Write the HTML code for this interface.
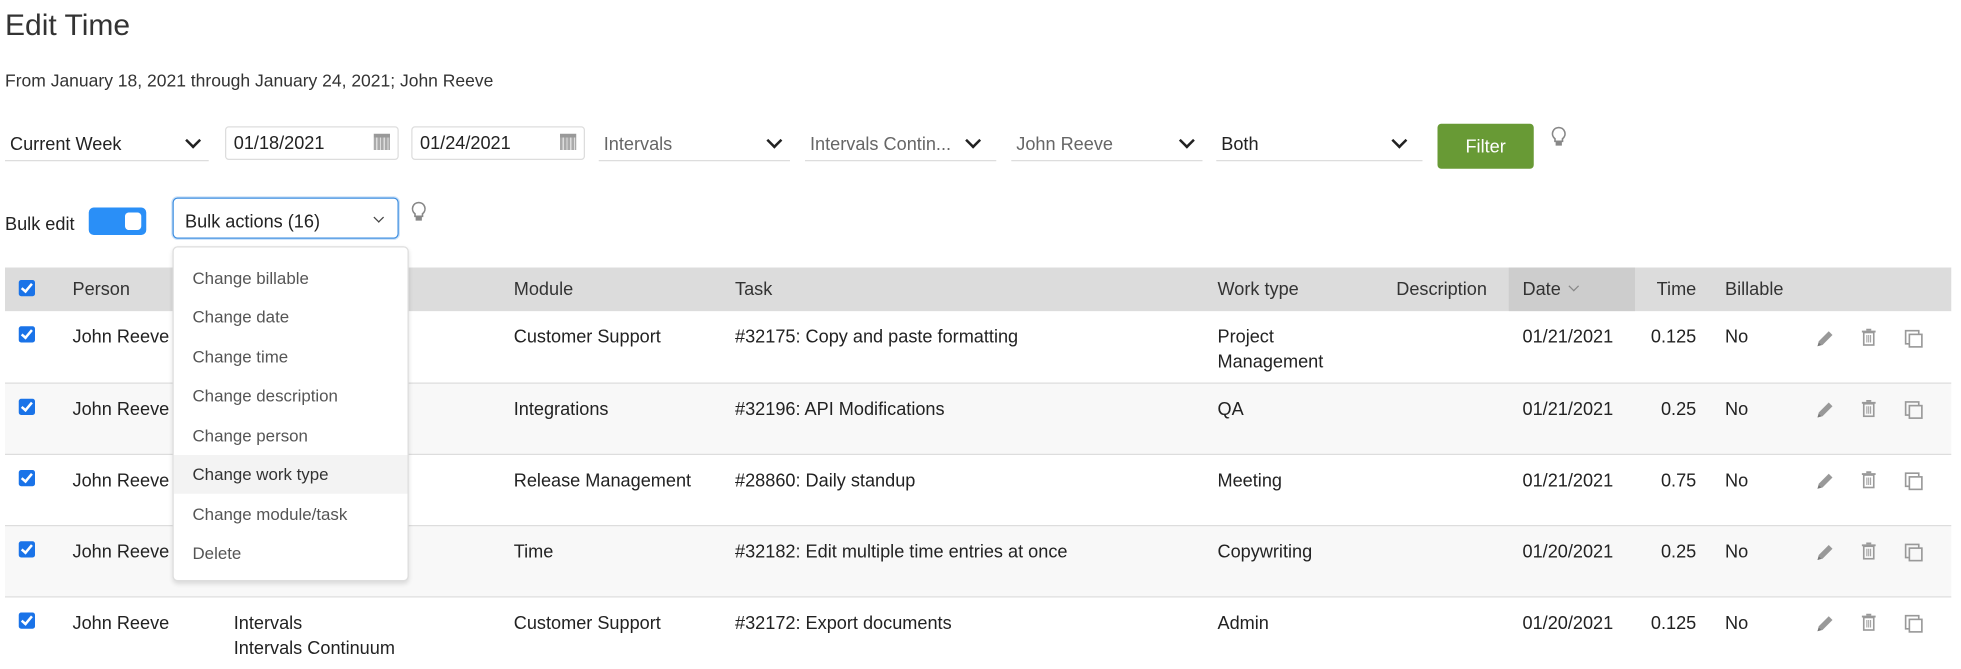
<!DOCTYPE html>
<html><head><meta charset="utf-8"><style>
html,body{margin:0;padding:0;background:#fff;overflow:hidden;width:1961px;height:657px}
#w{position:absolute;left:0;top:0;width:1569px;height:526px;transform:scale(1.25);transform-origin:0 0;font-family:"Liberation Sans",sans-serif;color:#222;font-size:14px}
.a{position:absolute;white-space:nowrap}
.sel{position:absolute;top:101px;height:27px;border-bottom:1px solid #ddd;line-height:31px;font-size:14.5px}
.sel .t{position:absolute;left:4px}
.chev{position:absolute;right:8px;width:7px;height:7px;border-right:2px solid #222;border-bottom:2px solid #222;transform:rotate(45deg);top:7px}
.date{position:absolute;top:101px;height:25px;border:1px solid #ddd;border-radius:3px;line-height:27px;font-size:14.5px}
.cal{position:absolute;right:6px;top:5px;width:13px;height:13px;background:repeating-linear-gradient(90deg,#aaa 0 2px,#ddd 2px 3px);border-top:3px solid #999;box-sizing:border-box}
.cb{position:absolute;width:13px;height:13px;background:#1a73e8;border-radius:2px}
.cb:after{content:"";position:absolute;left:4px;top:1px;width:3px;height:7px;border-right:2px solid #fff;border-bottom:2px solid #fff;transform:rotate(40deg)}
.row{position:absolute;left:4px;width:1557px;height:57px;border-top:1px solid #ddd}
.row .a{top:11px;line-height:20px;font-size:14.5px}
.dd div{position:absolute;left:15px;color:#555;font-size:13.5px}
</style></head><body><div id="w">
<div class="a" style="left:4px;top:7px;font-size:24px;color:#333">Edit Time</div>
<div class="a" style="left:4px;top:56px;font-size:14px;color:#333">From January 18, 2021 through January 24, 2021; John Reeve</div>

<div class="sel" style="left:4px;width:163px"><span class="t">Current Week</span><span class="chev"></span></div>
<div class="date" style="left:180px;width:137px"><span style="margin-left:6px">01/18/2021</span><span class="cal"></span></div>
<div class="date" style="left:329px;width:137px"><span style="margin-left:6px">01/24/2021</span><span class="cal"></span></div>
<div class="sel" style="left:479px;width:153px;color:#666"><span class="t">Intervals</span><span class="chev"></span></div>
<div class="sel" style="left:644px;width:153px;color:#666"><span class="t">Intervals Contin...</span><span class="chev" style="right:14px"></span></div>
<div class="sel" style="left:809px;width:153px;color:#666"><span class="t">John Reeve</span><span class="chev"></span></div>
<div class="sel" style="left:973px;width:165px"><span class="t">Both</span><span class="chev" style="right:14px"></span></div>
<div class="a" style="left:1150px;top:99px;width:77px;height:36px;background:#689a35;border-radius:3px;color:#fff;text-align:center;line-height:38px;font-size:14.5px">Filter</div>
<svg class="a" style="left:1241px;top:101px" width="12" height="17" viewBox="0 0 12 17"><path d="M6 1a5 5 0 0 0-3 9v2h6v-2a5 5 0 0 0-3-9z" fill="#fff" stroke="#888" stroke-width="1.3"/><rect x="3.5" y="12.5" width="5" height="3" fill="#888"/></svg>

<div class="a" style="left:4px;top:172px;font-size:14.5px">Bulk edit</div>
<div class="a" style="left:71px;top:166px;width:46px;height:22px;background:#2a8ff7;border-radius:4px"><div style="position:absolute;right:4px;top:4px;width:13px;height:14px;background:#fff;border-radius:3px"></div></div>
<div class="a" style="left:138px;top:158px;width:181px;height:33px;border:1px solid #3b8de0;border-radius:4px;box-shadow:0 0 0 1px #cfe3f8;box-sizing:border-box"><span style="position:absolute;left:9px;top:11px;font-size:14.5px">Bulk actions (16)</span><span style="position:absolute;right:12px;top:12px;width:5px;height:5px;border-right:1.3px solid #444;border-bottom:1.3px solid #444;transform:rotate(45deg)"></span></div>
<svg class="a" style="left:329px;top:161px" width="12" height="17" viewBox="0 0 12 17"><path d="M6 1a5 5 0 0 0-3 9v2h6v-2a5 5 0 0 0-3-9z" fill="#fff" stroke="#888" stroke-width="1.3"/><rect x="3.5" y="12.5" width="5" height="3" fill="#888"/></svg>

<div class="a" style="left:4px;top:214px;width:1557px;height:35px;background:#dcdcdc"></div>
<div class="a" style="left:1207px;top:214px;width:101px;height:35px;background:#cdcdcd"></div>
<div class="cb" style="left:15px;top:224px"></div>
<div class="a" style="left:58px;top:224px;font-size:14.5px;color:#333">Person</div>
<div class="a" style="left:187px;top:224px;font-size:14.5px;color:#333">Project</div>
<div class="a" style="left:411px;top:224px;font-size:14.5px;color:#333">Module</div>
<div class="a" style="left:588px;top:224px;font-size:14.5px;color:#333">Task</div>
<div class="a" style="left:974px;top:224px;font-size:14.5px;color:#333">Work type</div>
<div class="a" style="left:1117px;top:224px;font-size:14.5px;color:#333">Description</div>
<div class="a" style="left:1218px;top:224px;font-size:14.5px;color:#333">Date <span style="display:inline-block;width:5px;height:5px;border-right:1.3px solid #888;border-bottom:1.3px solid #888;transform:rotate(45deg);margin:0 0 4px 3px"></span></div>
<div class="a" style="left:1320px;top:224px;width:37px;text-align:right;font-size:14.5px;color:#333">Time</div>
<div class="a" style="left:1380px;top:224px;font-size:14.5px;color:#333">Billable</div>

<div class="row" style="top:249px;border-top:none;background:#fff">
<div class="cb" style="left:11px;top:12px"></div>
<div class="a" style="left:54px">John Reeve</div>
<div class="a" style="left:407px">Customer Support</div>
<div class="a" style="left:584px">#32175: Copy and paste formatting</div>
<div class="a" style="left:970px">Project<br>Management</div>
<div class="a" style="left:1214px">01/21/2021</div>
<div class="a" style="left:1300px;width:53px;text-align:right">0.125</div>
<div class="a" style="left:1376px">No</div>
</div>
<div class="row" style="top:306px;background:#f8f8f8">
<div class="cb" style="left:11px;top:12px"></div>
<div class="a" style="left:54px">John Reeve</div>
<div class="a" style="left:407px">Integrations</div>
<div class="a" style="left:584px">#32196: API Modifications</div>
<div class="a" style="left:970px">QA</div>
<div class="a" style="left:1214px">01/21/2021</div>
<div class="a" style="left:1300px;width:53px;text-align:right">0.25</div>
<div class="a" style="left:1376px">No</div>
</div>
<div class="row" style="top:363px;background:#fff">
<div class="cb" style="left:11px;top:12px"></div>
<div class="a" style="left:54px">John Reeve</div>
<div class="a" style="left:407px">Release Management</div>
<div class="a" style="left:584px">#28860: Daily standup</div>
<div class="a" style="left:970px">Meeting</div>
<div class="a" style="left:1214px">01/21/2021</div>
<div class="a" style="left:1300px;width:53px;text-align:right">0.75</div>
<div class="a" style="left:1376px">No</div>
</div>
<div class="row" style="top:420px;background:#f8f8f8">
<div class="cb" style="left:11px;top:12px"></div>
<div class="a" style="left:54px">John Reeve</div>
<div class="a" style="left:407px">Time</div>
<div class="a" style="left:584px">#32182: Edit multiple time entries at once</div>
<div class="a" style="left:970px">Copywriting</div>
<div class="a" style="left:1214px">01/20/2021</div>
<div class="a" style="left:1300px;width:53px;text-align:right">0.25</div>
<div class="a" style="left:1376px">No</div>
</div>
<div class="row" style="top:477px;background:#fff">
<div class="cb" style="left:11px;top:12px"></div>
<div class="a" style="left:54px">John Reeve</div>
<div class="a" style="left:183px">Intervals<br>Intervals Continuum</div>
<div class="a" style="left:407px">Customer Support</div>
<div class="a" style="left:584px">#32172: Export documents</div>
<div class="a" style="left:970px">Admin</div>
<div class="a" style="left:1214px">01/20/2021</div>
<div class="a" style="left:1300px;width:53px;text-align:right">0.125</div>
<div class="a" style="left:1376px">No</div>
</div>

<svg class="a" style="left:1450px;top:261px" width="90" height="250">
<defs><g id="ic">
<path d="M4 16l1-4 8-8 3 3-8 8z" fill="#999"/><path d="M4 16l1-3 2 2z" fill="#777"/>
<rect x="41" y="5" width="8" height="10" fill="none" stroke="#999" stroke-width="1.3"/><rect x="39.5" y="3.5" width="11" height="1.5" fill="#999"/><rect x="43" y="2" width="4" height="1.5" fill="#999"/><path d="M43.5 7v6M45 7v6M46.5 7v6" stroke="#999" stroke-width="0.8"/>
<path d="M77 14h-2.5V3.5h10.5V6" fill="none" stroke="#999" stroke-width="1.3"/><rect x="77.5" y="6.5" width="10" height="10" fill="none" stroke="#999" stroke-width="1.3"/>
</g></defs>
<use href="#ic" y="0"/><use href="#ic" y="57"/><use href="#ic" y="114"/><use href="#ic" y="171"/><use href="#ic" y="228"/>
</svg>

<div class="a dd" style="left:138px;top:197px;width:189px;height:268px;background:#fff;border:1px solid #ddd;border-radius:4px;box-shadow:0 2px 4px rgba(0,0,0,.12);box-sizing:border-box">
<div style="left:0;top:166px;width:187px;height:31px;background:#f3f3f3"></div>
<div style="top:17px">Change billable</div>
<div style="top:48px">Change date</div>
<div style="top:80px">Change time</div>
<div style="top:111px">Change description</div>
<div style="top:143px">Change person</div>
<div style="top:174px;color:#333">Change work type</div>
<div style="top:206px">Change module/task</div>
<div style="top:237px">Delete</div>
</div>
</div></body></html>
